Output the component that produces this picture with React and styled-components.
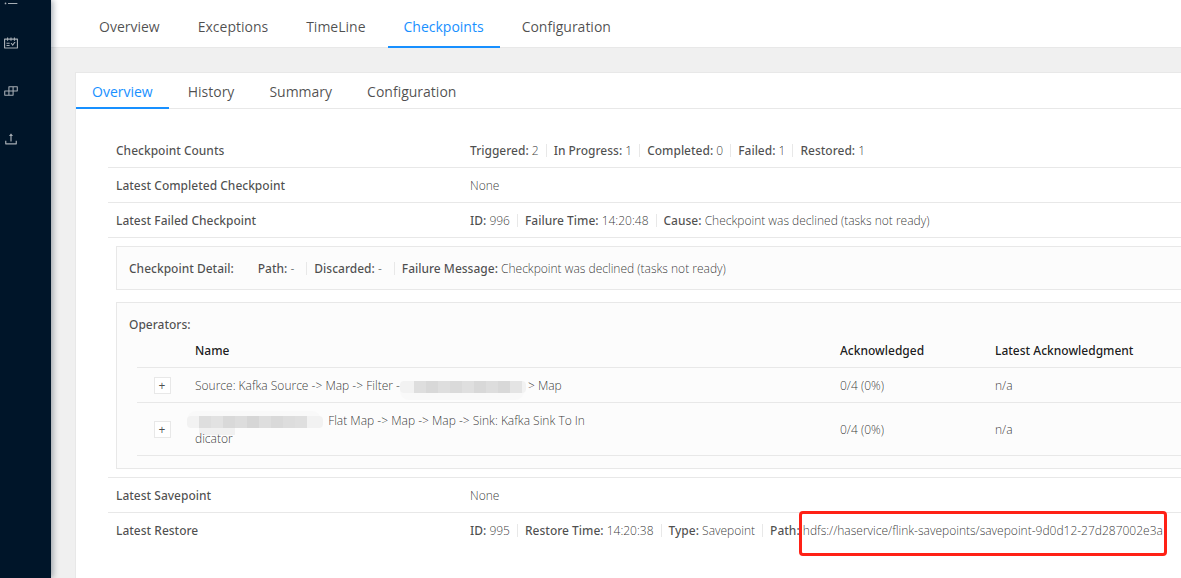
import React from 'react'
import styled, { createGlobalStyle, css } from 'styled-components'
import { AiOutlineUnorderedList, AiOutlineSchedule, AiOutlineBuild, AiOutlineUpload } from 'react-icons/ai'

const GlobalStyle = createGlobalStyle`
    *, *::before, *::after {
        box-sizing: border-box;
    }
    :root {
        --color-primary: #1890ff;
        --color-border: #e8e8e8;
        --color-text: rgba(0, 0, 0, 0.7);
        --color-value: rgba(0, 0, 0, 0.8);
        --color-heading: rgba(0, 0, 0, 0.9);
    }
    body {
        margin: 0;
        overflow: hidden;
        font-family: 'Open Sans', 'Noto Sans', sans-serif;
        font-size: 12px;
        font-weight: 300;
        line-height: 18px;
        color: var(--color-value);
        background: #f0f0f0;
    }
`

const Layout = styled.div`
    display: flex;
    height: 100vh;
    overflow: hidden;
`

const Sidebar = styled.nav`
    flex: 0 0 51px;
    z-index: 1;
    overflow: hidden;
    background: #001529;
    box-shadow: 2px 0 6px rgba(0, 21, 41, 0.35);
`

const MenuLink = styled.a`
    display: flex;
    align-items: center;
    height: 48px;
    padding-left: 3px;
    font-size: 16px;
    color: rgba(255, 255, 255, 0.65);
`

const Menu = styled.ul`
    display: flex;
    flex-direction: column;
    list-style: none;
    margin: -21px 0 0;
    padding: 0;
    li:first-child ${ MenuLink } {
        height: 40px;
    }
`

const Main = styled.main`
    flex: 1;
    min-width: 0;
    display: flex;
    flex-direction: column;
`

const TabBar = styled.div`
    display: flex;
    flex: none;
    border-bottom: 1px solid var(--color-border);
    background: #fff;
    ${ props => props.$small ? css`
        gap: 3px;
    ` : css`
        gap: 6px;
        padding-left: 32px;
    ` }
`

const Tab = styled.button`
    margin: 0 0 -1px;
    padding: ${ props => props.$small ? '10px 16px 6px' : '17px 16px 9px' };
    border: 0;
    border-bottom: 2px solid ${ props => props.$active ? 'var(--color-primary)' : 'transparent' };
    background: none;
    font-family: inherit;
    font-size: 14px;
    font-weight: 500;
    line-height: ${ props => props.$small ? '18px' : '20px' };
    color: ${ props => props.$active ? 'var(--color-primary)' : 'var(--color-text)' };
`

const Card = styled.section`
    flex: 1;
    margin: 24px 0 0 24px;
    border: 1px solid var(--color-border);
    border-width: 1px 0 0 1px;
    background: #fff;
`

const CardBody = styled.div`
    padding: 24px 0 24px 32px;
`

const Table = styled.table`
    width: 100%;
    table-layout: fixed;
    border-collapse: separate;
    border-spacing: 0;
`

const LabelColumn = styled.col`
    width: 354px;
`

const Label = styled.th`
    padding: 9px 8px 7px;
    border-bottom: ${ props => props.$last ? 0 : '1px solid var(--color-border)' };
    font-family: 'Noto Sans', sans-serif;
    font-weight: 500;
    text-align: left;
    color: var(--color-text);
`

const Cell = styled.td`
    padding: 9px 8px 7px;
    border-bottom: ${ props => props.$last ? 0 : '1px solid var(--color-border)' };
    white-space: nowrap;
`

const DetailCell = styled(Cell)`
    padding: 8px 0 8px 8px;
`

const Divider = styled.span`
    display: inline-block;
    width: 1px;
    height: 13px;
    margin: 0 7px;
    vertical-align: -2px;
    background: var(--color-border);
`

const Strong = styled.strong`
    font-family: 'Noto Sans', sans-serif;
    font-weight: 500;
    color: var(--color-text);
`

const Panel = styled.div`
    padding: 13px 0 11px 12px;
    border: 1px solid var(--color-border);
    border-right: 0;
    background: #fcfcfc;
    & + & {
        margin-top: 12px;
    }
    ${ Divider } {
        margin-left: 12px;
    }
`

const PanelTitle = styled(Strong)`
    margin-right: 24px;
`

const OperatorTable = styled(Table)`
    width: calc(100% - 8px);
    margin: -1px 0 1px 8px;
`

const ExpandColumn = styled.col`
    width: 50px;
`

const NameColumn = styled.col`
    width: 645px;
`

const AcknowledgedColumn = styled.col`
    width: 155px;
`

const OperatorHeading = styled(Label)`
    color: var(--color-heading);
    white-space: nowrap;
`

const ExpandCell = styled(Cell)`
    padding: 0;
    text-align: center;
`

const ExpandButton = styled.button`
    display: block;
    width: 17px;
    height: 17px;
    margin: 0 auto;
    padding: 0;
    border: 1px solid var(--color-border);
    background: #fff;
    font-family: inherit;
    font-size: 12px;
    line-height: 15px;
    text-align: center;
    color: var(--color-text);
`

const OperatorName = styled.div`
    width: 394px;
    white-space: normal;
    word-break: break-all;
`

const Redacted = styled.svg`
    display: inline-block;
    height: 12px;
    vertical-align: -3px;
    overflow: visible;
    margin-left: ${ props => props.$leading ? '-8px' : 0 };
`

const Highlighted = styled.span`
    position: relative;
    &::after {
        content: '';
        position: absolute;
        top: -11px;
        right: -4px;
        bottom: -17px;
        left: -4px;
        border: 3px solid #ff2116;
        border-radius: 4px;
        pointer-events: none;
    }
`

const menu = [
    { name: 'Jobs', Icon: AiOutlineUnorderedList },
    { name: 'Completed jobs', Icon: AiOutlineSchedule },
    { name: 'Task managers', Icon: AiOutlineBuild },
    { name: 'Submit job', Icon: AiOutlineUpload },
]

const jobTabs = ['Overview', 'Exceptions', 'TimeLine', 'Checkpoints', 'Configuration']
const checkpointTabs = ['Overview', 'History', 'Summary', 'Configuration']

const Tabs = ({ tabs, active, small }) => (
    <TabBar role="tablist" $small={ small }>
        {
            tabs.map(tab => (
                <Tab key={ tab } type="button" role="tab" aria-selected={ tab === active } $active={ tab === active } $small={ small }>{ tab }</Tab>
            ))
        }
    </TabBar>
)

// pairs of [label, value], separated by thin vertical rules
const Fields = ({ items }) => items.map(([label, value], i) => (
    <React.Fragment key={ label }>
        { i > 0 && <Divider /> }
        <Strong>{ label }:</Strong> { value }
    </React.Fragment>
))

const Row = ({ label, last, children }) => (
    <tr>
        <Label scope="row" $last={ last }>{ label }</Label>
        <Cell $last={ last }>{ children }</Cell>
    </tr>
)

// hidden operator names are drawn as a strip of 12px gray blocks
const Mosaic = ({ shades, width, start, leading }) => (
    <Redacted width={ width } height="12" $leading={ leading } aria-hidden="true">
        <rect x="0" y={ leading ? -5 : 2 } width={ width - 4 } height="17" rx="9" fill="#f9f9f9" />
        { leading && <rect x="12" y="12" width="36" height="7" fill="#f1f1f1" /> }
        <rect x="0" y="0" width={ width - 2 } height="12" rx="4" fill="#f2f2f2" />
        { shades.map((shade, i) => <rect key={ i } x={ 12 * i + start } y="0" width="12" height="12" fill={ shade } />) }
    </Redacted>
)

const Operator = ({ name, children }) => (
    <tr>
        <ExpandCell><ExpandButton type="button" aria-label={ `Expand ${ name }` }>+</ExpandButton></ExpandCell>
        <Cell><OperatorName>{ children }</OperatorName></Cell>
        <Cell>0/4 (0%)</Cell>
        <Cell>n/a</Cell>
    </tr>
)

const Operators = () => (
    <Panel>
        <Strong>Operators:</Strong>
        <OperatorTable>
            <colgroup>
                <ExpandColumn />
                <NameColumn />
                <AcknowledgedColumn />
                <col />
            </colgroup>
            <thead>
                <tr>
                    <OperatorHeading as="td" />
                    <OperatorHeading scope="col">Name</OperatorHeading>
                    <OperatorHeading scope="col">Acknowledged</OperatorHeading>
                    <OperatorHeading scope="col">Latest Acknowledgment</OperatorHeading>
                </tr>
            </thead>
            <tbody>
                <Operator name="source">
                    Source: Kafka Source -&gt; Map -&gt; Filter -
                    <Mosaic width={ 128 } start={ 14 } shades={ ['#dedede', '#d8d8d8', '#dedede', '#dadada', '#dfdfdf', '#d8d8d8', '#dddddd', '#d8d8d8', '#e4e4e4'] } />
                    &gt; Map
                </Operator>
                <Operator name="sink">
                    <Mosaic leading width={ 138 } start={ 12 } shades={ ['#dedede', '#e2e2e2', '#d9d9d9', '#dddddd', '#d6d6d6', '#dedede', '#d9d9d9', '#dddddd', '#dfdfdf'] } />
                    {' '}Flat Map -&gt; Map -&gt; Map -&gt; Sink: Kafka Sink To Indicator
                </Operator>
            </tbody>
        </OperatorTable>
    </Panel>
)

const CheckpointOverview = () => (
    <Table>
        <colgroup>
            <LabelColumn />
            <col />
        </colgroup>
        <tbody>
            <Row label="Checkpoint Counts">
                <Fields items={ [['Triggered', 2], ['In Progress', 1], ['Completed', 0], ['Failed', 1], ['Restored', 1]] } />
            </Row>
            <Row label="Latest Completed Checkpoint">None</Row>
            <Row label="Latest Failed Checkpoint">
                <Fields items={ [['ID', 996], ['Failure Time', '14:20:48'], ['Cause', 'Checkpoint was declined (tasks not ready)']] } />
            </Row>
            <tr>
                <DetailCell colSpan="2">
                    <Panel>
                        <PanelTitle>Checkpoint Detail:</PanelTitle>
                        <Fields items={ [['Path', '-'], ['Discarded', '-'], ['Failure Message', 'Checkpoint was declined (tasks not ready)']] } />
                    </Panel>
                    <Operators />
                </DetailCell>
            </tr>
            <Row label="Latest Savepoint">None</Row>
            <Row label="Latest Restore" last>
                <Fields items={ [
                    ['ID', 995],
                    ['Restore Time', '14:20:38'],
                    ['Type', 'Savepoint'],
                    ['Path', <Highlighted key="path">hdfs://haservice/flink-savepoints/savepoint-9d0d12-27d287002e3a</Highlighted>],
                ] } />
            </Row>
        </tbody>
    </Table>
)

const App = () => (
    <Layout>
        <GlobalStyle />
        <Sidebar>
            <Menu>
                { menu.map(({ name, Icon }) => <li key={ name }><MenuLink href="#" aria-label={ name }><Icon /></MenuLink></li>) }
            </Menu>
        </Sidebar>
        <Main>
            <Tabs tabs={ jobTabs } active="Checkpoints" />
            <Card>
                <Tabs small tabs={ checkpointTabs } active="Overview" />
                <CardBody>
                    <CheckpointOverview />
                </CardBody>
            </Card>
        </Main>
    </Layout>
)

export default App
